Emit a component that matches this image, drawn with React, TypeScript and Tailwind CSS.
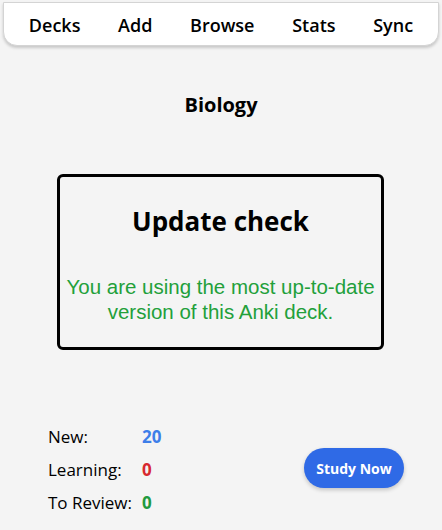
import { useState } from "react";

const tabs = ["Decks", "Add", "Browse", "Stats", "Sync"];

const ui = { fontFamily: '"Open Sans", "Noto Sans", sans-serif' };

const App = () => {
  const [active, setActive] = useState("Decks");

  const counts = [
    { label: "New:", value: 20, color: "text-[#3d7ee9]" },
    { label: "Learning:", value: 0, color: "text-[#d7282f]" },
    { label: "To Review:", value: 0, color: "text-[#219a3e]" },
  ];

  return (
    <div className="min-h-[530px] bg-[#f4f4f4] text-black" style={ui}>
      {/* top nav */}
      <div className="px-[3px] pt-[2px]">
        <nav className="flex h-[44px] items-center justify-around rounded-b-[14px] border border-[#d4d4d4] bg-white px-[6px] pt-[2px] shadow-[0_2px_3px_rgba(0,0,0,0.18)]">
          {tabs.map((t) => (
            <button
              key={t}
              onClick={() => setActive(t)}
              className={`text-[18px] font-semibold leading-none ${active === t ? "text-black" : "text-black"}`}
            >
              {t}
            </button>
          ))}
        </nav>
      </div>

      <h2 className="mt-[45px] text-center text-[20px] font-bold leading-[28px]">Biology</h2>

      {/* update box */}
      <div className="ml-[57px] mr-[58px] mt-[55px] flex h-[176px] flex-col items-center rounded-[6px] border-[3px] border-black px-1">
        <h1 className="mt-[26px] text-[26px] font-bold leading-[36px]">Update check</h1>
        <p
          className="mt-[35px] text-center text-[20.5px] leading-[25px] text-[#22a03a]"
          style={{ fontFamily: '"Liberation Sans", Arial, sans-serif' }}
        >
          You are using the most up-to-date version of this Anki deck.
        </p>
      </div>

      {/* counts + study */}
      <div className="mt-[75px] flex items-center justify-between pl-[48px] pr-[38px]">
        <div className="flex flex-col gap-[9px]">
          {counts.map((c) => (
            <div key={c.label} className="flex items-center text-[17px] leading-[24px]">
              <span className="w-[94px]">{c.label}</span>
              <span className={`font-bold ${c.color}`}>{c.value}</span>
            </div>
          ))}
        </div>
        <button className="mb-[4px] h-[40px] w-[100px] rounded-full bg-[#2f6ae6] text-[14px] font-bold text-white shadow-[0_2px_4px_rgba(0,0,0,0.2)]">
          Study Now
        </button>
      </div>
    </div>
  );
};

export default App;
